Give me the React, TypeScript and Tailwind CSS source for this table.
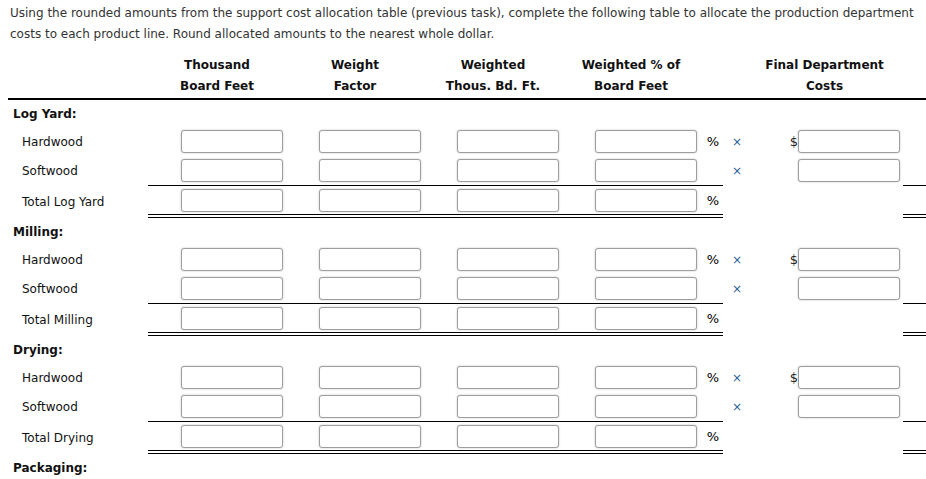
import React from "react";

const font = { fontFamily: '"DejaVu Sans", Verdana, sans-serif' };

function Box() {
  return (
    <input
      type="text"
      className="w-[102px] h-[23px] rounded-[3px] border border-[#9e9e9e] bg-white shadow-[0_0_2px_rgba(0,0,0,0.25)] outline-none"
    />
  );
}

function Cell() {
  return (
    <div className="w-[138px] pl-[33px] flex items-start">
      <Box />
    </div>
  );
}

type RowKind = "hard" | "soft" | "total";

function DataRow({ label, kind }: { label: string; kind: RowKind }) {
  const line =
    kind === "soft"
      ? "border-b border-black"
      : kind === "total"
      ? "border-b-4 border-double border-black"
      : "";
  const h =
    kind === "hard"
      ? "h-[30px] pt-[4px]"
      : kind === "soft"
      ? "h-[30px] pt-[3px]"
      : "h-[32px] pt-[3px]";
  const lh =
    kind === "hard"
      ? "h-[30px] pt-[5px]"
      : kind === "soft"
      ? "h-[30px] pt-[4px]"
      : "h-[32px] pt-[5px]";
  return (
    <div className="flex">
      <div className={`w-[148px] pl-[22px] text-[12px] leading-[23px] text-[#111] ${lh}`}>
        {label}
      </div>
      <div className={`flex items-start w-[575px] ${h} ${line}`}>
        <Cell />
        <Cell />
        <Cell />
        <Cell />
        <div className="w-[23px] h-[23px] flex items-center justify-end pr-[4px] text-[13px] text-black">
          {kind !== "soft" ? "%" : ""}
        </div>
      </div>
      <div className={`flex items-start w-[180px] ${h}`}>
        <div className="w-[75px] h-[23px] flex items-center">
          {kind !== "total" && (
            <span className="pl-[9px] text-[12px] text-[#2d5f96]">×</span>
          )}
          <span className="ml-auto text-[13px] text-[#222] leading-none">
            {kind === "hard" ? "$" : ""}
          </span>
        </div>
        <div className="w-[102px] flex items-start">{kind !== "total" && <Box />}</div>
      </div>
      <div className={`w-[23px] ${h} ${line}`} />
    </div>
  );
}

function Section({ title, name }: { title: string; name: string }) {
  return (
    <div>
      <div className="h-[26px] pl-[13px] pt-[1px] flex items-center text-[12px] font-bold text-[#111]">
        {title}
      </div>
      <DataRow label="Hardwood" kind="hard" />
      <DataRow label="Softwood" kind="soft" />
      <DataRow label={`Total ${name}`} kind="total" />
    </div>
  );
}

export default function App() {
  return (
    <div className="w-[926px] h-[479px] overflow-hidden bg-white" style={font}>
      <p className="pl-[10px] pr-[6px] pt-[3px] text-[12px] leading-[21px] text-[#333]">
        Using the rounded amounts from the support cost allocation table (previous task), complete the following table to allocate the production department costs to each product line. Round allocated amounts to the nearest whole dollar.
      </p>
      <div className="mt-[10px] flex text-[12px] font-bold leading-[21px] text-[#111]">
        <div className="w-[148px]" />
        <div className="w-[138px] text-center">Thousand<br />Board Feet</div>
        <div className="w-[138px] text-center">Weight<br />Factor</div>
        <div className="w-[138px] text-center">Weighted<br />Thous. Bd. Ft.</div>
        <div className="w-[138px] text-center">Weighted % of<br />Board Feet</div>
        <div className="w-[23px]" />
        <div className="w-[203px] text-center">Final Department<br />Costs</div>
      </div>
      <div className="mt-[1px] ml-[8px] h-[2px] bg-black" />
      <Section title="Log Yard:" name="Log Yard" />
      <Section title="Milling:" name="Milling" />
      <Section title="Drying:" name="Drying" />
      <div className="h-[26px] pl-[13px] pt-[1px] flex items-center text-[12px] font-bold text-[#111]">
        Packaging:
      </div>
    </div>
  );
}
